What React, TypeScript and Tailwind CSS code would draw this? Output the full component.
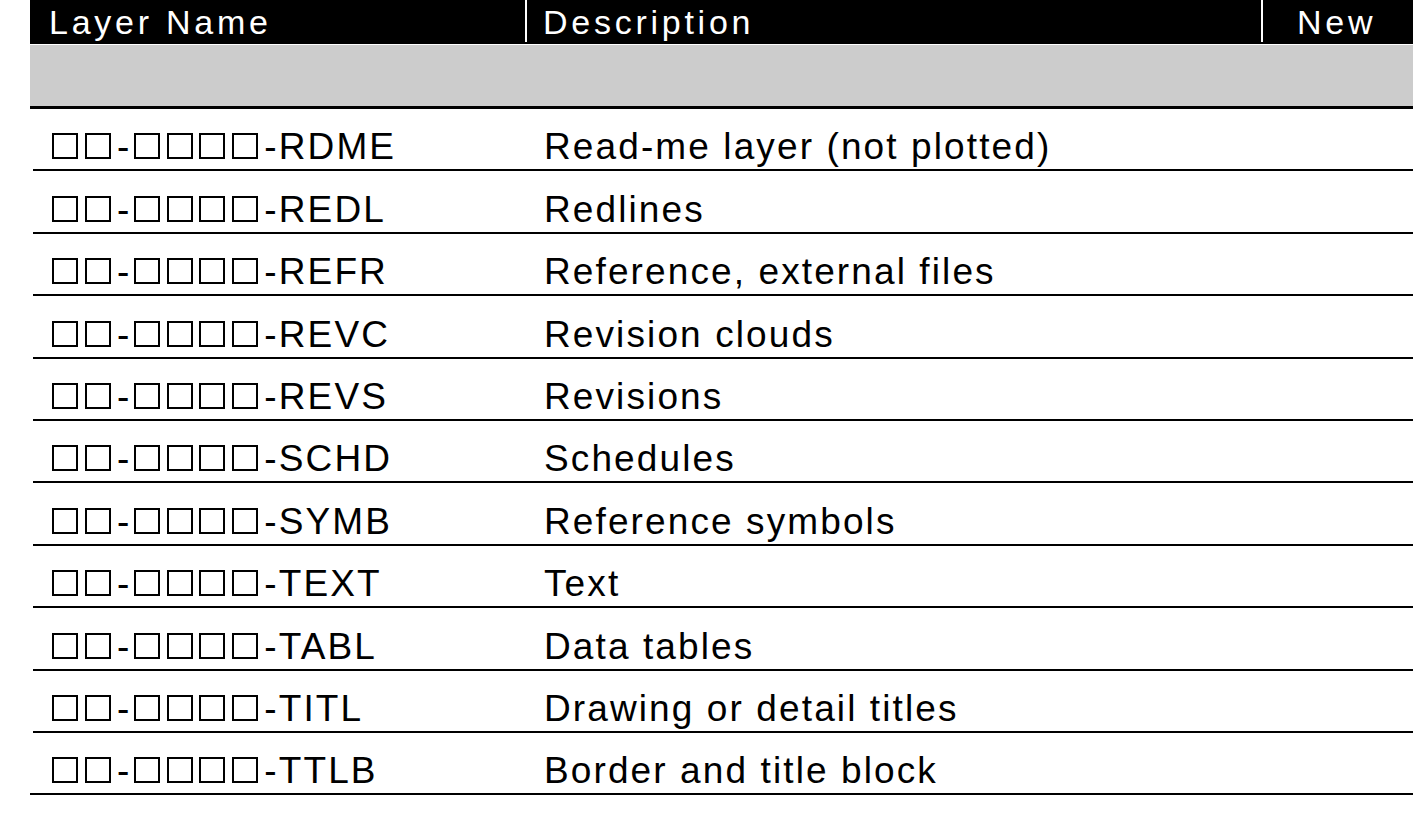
const rows: [string, string][] = [
  ["RDME", "Read-me layer (not plotted)"],
  ["REDL", "Redlines"],
  ["REFR", "Reference, external files"],
  ["REVC", "Revision clouds"],
  ["REVS", "Revisions"],
  ["SCHD", "Schedules"],
  ["SYMB", "Reference symbols"],
  ["TEXT", "Text"],
  ["TABL", "Data tables"],
  ["TITL", "Drawing or detail titles"],
  ["TTLB", "Border and title block"],
];

// missing-glyph squares, as they show up in the source sheet
function Box() {
  return (
    <span className="inline-block shrink-0 w-[26px] h-[26px] border-[2.5px] border-black mr-[6.5px] align-baseline" />
  );
}

function LayerName({ code }: { code: string }) {
  return (
    <span className="whitespace-nowrap">
      <Box />
      <Box />
      <span className="mr-[5px]">-</span>
      <Box />
      <Box />
      <Box />
      <Box />
      <span className="tracking-[0.057em]">-{code}</span>
    </span>
  );
}

export default function App() {
  return (
    <div className="w-[1419px] h-[813px] bg-white font-['Liberation_Sans',Arial,sans-serif] text-black">
      <div className="ml-[30px] w-[1383px]">
        <div className="flex h-[44px] bg-black text-white text-[34px] tracking-[0.11em] leading-none">
          <div className="w-[497px] border-r-2 border-white mb-[2px] pl-[19px] pt-[5px]">Layer Name</div>
          <div className="w-[736px] border-r-2 border-white mb-[2px] pl-[16px] pt-[5px]">Description</div>
          <div className="flex-1 pl-[34px] pt-[5px]">New</div>
        </div>
        <div className="h-[64px] mt-[1px] bg-[#cccccc] border-b-[3px] border-black" />
        {rows.map(([code, desc], i) => (
          <div
            key={code}
            className={`flex items-end h-[62.4px] pb-[4px] border-b-2 border-black text-[37px] leading-none ${
              i === rows.length - 1 ? "" : "ml-[3px]"
            }`}
          >
            <div className={`${i === rows.length - 1 ? "w-[514px] pl-[22px]" : "w-[511px] pl-[19px]"}`}>
              <LayerName code={code} />
            </div>
            <div className="flex-1 tracking-[0.057em]">{desc}</div>
          </div>
        ))}
      </div>
    </div>
  );
}
